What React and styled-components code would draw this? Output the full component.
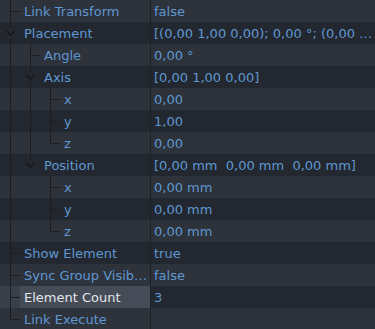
import React from "react";
import styled, { createGlobalStyle } from "styled-components";

const GlobalStyle = createGlobalStyle`
  html, body {
    margin: 0;
    padding: 0;
    background: #232830;
  }
  body {
    font-family: "DejaVu Sans", "Liberation Sans", sans-serif;
    font-size: 13px;
  }
`;

const Tree = styled.div`
  width: 375px;
  height: 329px;
  overflow: hidden;
  background: #232830;
`;

const Row = styled.div`
  display: flex;
  height: 22px;
  background: ${(p) => (p.$alt ? "#2d323b" : "#232830")};
`;

const NameCell = styled.div`
  display: flex;
  width: 150px;
  flex-shrink: 0;
  overflow: hidden;
`;

const Branch = styled.svg`
  flex-shrink: 0;
  display: block;
  background: ${(p) => (p.$selected ? "#3a404a" : "transparent")};
`;

const Label = styled.div`
  flex: 1;
  min-width: 0;
  padding: 1px 0 0 4px;
  line-height: 21px;
  white-space: pre;
  overflow: hidden;
  color: ${(p) => (p.$selected ? "#e4e6ea" : "#5f97d2")};
  background: ${(p) => (p.$selected ? "#454c57" : "transparent")};
`;

const Divider = styled.div`
  width: 1px;
  flex-shrink: 0;
  background: #1d2128;
`;

const ValueCell = styled.div`
  flex: 1;
  min-width: 0;
  padding: 1px 0 0 3px;
  line-height: 21px;
  white-space: pre;
  overflow: hidden;
  color: #5f97d2;
`;

const LINE = "#1a1e24";

// one 20x22 slot of tree guides
function Guide({ kind, selected }) {
  return (
    <Branch width="20" height="22" viewBox="0 0 20 22" $selected={selected}>
      {kind === "pipe" && <line x1="10.5" y1="0" x2="10.5" y2="22" stroke={LINE} />}
      {kind === "tee" && (
        <>
          <line x1="10.5" y1="0" x2="10.5" y2="22" stroke={LINE} />
          <line x1="10.5" y1="11.5" x2="20" y2="11.5" stroke={LINE} />
        </>
      )}
      {kind === "elbow" && (
        <>
          <line x1="10.5" y1="0" x2="10.5" y2="11.5" stroke={LINE} />
          <line x1="10.5" y1="11.5" x2="20" y2="11.5" stroke={LINE} />
        </>
      )}
      {(kind === "open" || kind === "openLast") && (
        <>
          <line x1="10.5" y1="0" x2="10.5" y2="6" stroke={LINE} />
          {kind === "open" && <line x1="10.5" y1="16" x2="10.5" y2="22" stroke={LINE} />}
          <polyline
            points="6.5,9 10.5,13 14.5,9"
            fill="none"
            stroke="#14171b"
            strokeWidth="1.6"
          />
        </>
      )}
    </Branch>
  );
}

const tree = [
  { name: "Link Transform", value: "false" },
  {
    name: "Placement",
    value: "[(0,00 1,00 0,00); 0,00 °; (0,00 …",
    children: [
      { name: "Angle", value: "0,00 °" },
      {
        name: "Axis",
        value: "[0,00 1,00 0,00]",
        children: [
          { name: "x", value: "0,00" },
          { name: "y", value: "1,00" },
          { name: "z", value: "0,00" },
        ],
      },
      {
        name: "Position",
        value: "[0,00 mm  0,00 mm  0,00 mm]",
        children: [
          { name: "x", value: "0,00 mm" },
          { name: "y", value: "0,00 mm" },
          { name: "z", value: "0,00 mm" },
        ],
      },
    ],
  },
  { name: "Show Element", value: "true" },
  { name: "Sync Group Visib…", value: "false" },
  { name: "Element Count", value: "3", selected: true },
  { name: "Link Execute", value: "" },
];

function flatten(items, trail = [], out = []) {
  items.forEach((item, i) => {
    const last = i === items.length - 1;
    const own = item.children
      ? last ? "openLast" : "open"
      : last ? "elbow" : "tee";
    const guides = [...trail.map((more) => (more ? "pipe" : "blank")), own];
    out.push({ ...item, guides });
    if (item.children) flatten(item.children, [...trail, !last], out);
  });
  return out;
}

export default function App() {
  const rows = flatten(tree);
  // first visible item continues from rows above
  rows[0].guides = ["tee"];
  return (
    <>
      <GlobalStyle />
      <Tree>
        {rows.map((r, i) => (
          <Row key={i} $alt={i % 2 === 0}>
            <NameCell>
              {r.guides.map((g, j) => (
                <Guide key={j} kind={g} selected={r.selected} />
              ))}
              <Label $selected={r.selected}>{r.name}</Label>
            </NameCell>
            <Divider />
            <ValueCell>{r.value}</ValueCell>
          </Row>
        ))}
      </Tree>
    </>
  );
}
